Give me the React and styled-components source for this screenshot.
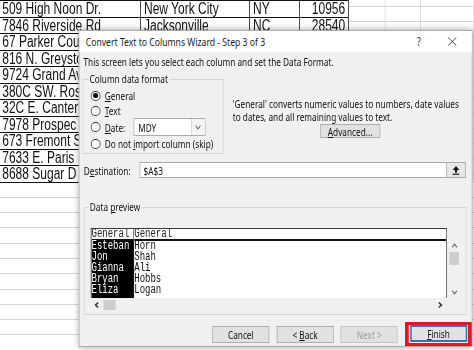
import React from 'react'
import styled, { createGlobalStyle } from 'styled-components'

const GlobalStyle = createGlobalStyle`
  html, body {
    margin: 0;
    padding: 0;
    overflow: hidden;
    background: #fff;
  }
`;

// the screenshot is squeezed sideways, so the canvas is laid out wide and scaled back
const Stage = styled.div`
  position: relative;
  width: 632px;
  height: 350px;
  overflow: hidden;
  transform: scaleX(0.75);
  transform-origin: 0 0;
  font-family: "Liberation Sans", Arial, sans-serif;
`;

const Sheet = styled.div`
  display: flex;
  flex-direction: column;
`;

const TopArea = styled.div`
  display: flex;
  align-items: flex-start;
`;

const DataBlock = styled.div`
  display: flex;
  flex-direction: column;
  width: 465.3px;
  border-top: 1px solid #111;
`;

const DataRow = styled.div`
  display: flex;
  height: 16.5px;
  box-sizing: border-box;
  border-bottom: 1px solid #111;
`;

const Cell = styled.div`
  width: ${p => p.$w}px;
  box-sizing: border-box;
  border-right: 1px solid #111;
  padding: 0 4px 0 ${p => p.$pl ?? 4}px;
  font-size: 16px;
  line-height: 15.5px;
  white-space: nowrap;
  overflow: hidden;
  text-align: ${p => p.$align || 'left'};
  color: #111;
`;

const ExtraBlock = styled.div`
  flex: 1;
  height: 182.5px;
  overflow: hidden;
  display: flex;
  flex-direction: column;
`;

const GridRow = styled.div`
  display: flex;
  flex: none;
  height: ${p => p.$h}px;
  box-sizing: border-box;
  border-bottom: 1px solid #d6d6d6;
`;

const GridCell = styled.div`
  width: ${p => p.$w}px;
  box-sizing: border-box;
  border-right: 1px solid #d6d6d6;
`;

/* ---------- dialog ---------- */

const Dialog = styled.div`
  position: absolute;
  left: 105.3px;
  top: 30px;
  width: 525px;
  height: 317px;
  box-sizing: border-box;
  background: #f0f0f0;
  border: 1px solid #a9a9a9;
  box-shadow: 0 0 8px rgba(0, 0, 0, 0.38);
  font-family: "Noto Sans", "Open Sans", sans-serif;
  font-size: 11px;
  color: #111;
  display: flex;
  flex-direction: column;
`;

const TitleBar = styled.div`
  height: 21px;
  flex: none;
  background: #fff;
  display: flex;
  align-items: center;
  padding: 0 20px 0 8px;
`;

const Title = styled.span`
  font-size: 11.5px;
  color: #222;
`;

const TitleTools = styled.div`
  margin-left: auto;
  display: flex;
  align-items: center;
  gap: 36px;
  color: #333;
  font-size: 12px;
`;

const Body = styled.div`
  display: flex;
  flex-direction: column;
  padding: 0 0 0 4px;
`;

const Intro = styled.div`
  margin-top: 4px;
  line-height: 12px;
  padding-left: 1px;
`;

const FormatRow = styled.div`
  display: flex;
  margin-top: 5px;
`;

const Group = styled.fieldset`
  margin: 0;
  padding: 0;
  width: ${p => p.$w}px;
  height: ${p => p.$h}px;
  box-sizing: border-box;
  border: 1px solid #d5d5d5;
  min-width: 0;
`;

const Legend = styled.legend`
  margin-left: ${p => p.$ml}px;
  padding: 0 2px;
  font-size: 11px;
  line-height: 12px;
`;

const RadioList = styled.div`
  display: flex;
  flex-direction: column;
  padding-top: 3px;
`;

const RadioRow = styled.div`
  display: flex;
  align-items: center;
  height: ${p => p.$h || 15}px;
`;

const Radio = styled.span`
  width: 13.3px;
  height: 10px;
  box-sizing: border-box;
  margin-left: 9.7px;
  border: solid #333;
  border-width: 1px 1.35px;
  border-radius: 50%;
  background: #fff;
  display: flex;
  align-items: center;
  justify-content: center;

  &::after {
    content: '';
    display: ${p => (p.$checked ? 'block' : 'none')};
    width: 6.7px;
    height: 5px;
    border-radius: 50%;
    background: #111;
  }
`;

const RadioLabel = styled.span`
  margin-left: 5.4px;
  width: ${p => (p.$w ? `${p.$w}px` : 'auto')};
  flex: none;
`;

const Select = styled.div`
  width: 96px;
  height: 18px;
  box-sizing: border-box;
  border: 1px solid #acacac;
  background: #fff;
  display: flex;
  align-items: center;
`;

const SelectValue = styled.span`
  flex: 1;
  padding-left: 5px;
`;

const SelectArrow = styled.span`
  width: 18.7px;
  height: 100%;
  box-sizing: border-box;
  border-left: 1px solid #d0d0d0;
  background: #f4f4f4;
  display: flex;
  align-items: center;
  justify-content: center;
`;

const Explain = styled.div`
  flex: 1;
  margin-left: 12px;
  margin-right: 6px;
  padding-top: 25px;
  display: flex;
  flex-direction: column;
`;

const ExplainText = styled.div`
  line-height: 12.5px;
  white-space: nowrap;
`;

const Button = styled.div`
  width: ${p => p.$w || 76}px;
  height: ${p => p.$h || 17}px;
  box-sizing: border-box;
  background: #e1e1e1;
  border: 1px solid ${p => (p.$disabled ? '#c4c4c4' : '#adadad')};
  color: ${p => (p.$disabled ? '#9d9d9d' : '#111')};
  display: flex;
  align-items: center;
  justify-content: center;
  flex: none;
`;

const ButtonText = styled.span`
  white-space: pre;
`;

const AdvancedButton = styled(Button)`
  align-self: center;
  margin-top: 1px;
`;

const DestRow = styled.div`
  display: flex;
  align-items: center;
  height: 16px;
  margin-top: 8px;
`;

const DestLabel = styled.span`
  width: 74.6px;
  padding-left: 1.4px;
  flex: none;
`;

const DestInput = styled.div`
  width: 409.4px;
  height: 16px;
  box-sizing: border-box;
  border: 1px solid #a9a9a9;
  background: #fff;
  padding-left: 4px;
  display: flex;
  align-items: center;
`;

const CollapseButton = styled.div`
  width: 25.3px;
  height: 16px;
  box-sizing: border-box;
  border: 1px solid #a9a9a9;
  border-left: none;
  background: #e6e6e6;
  display: flex;
  align-items: center;
  justify-content: center;
`;

const PreviewGroup = styled(Group)`
  margin-top: 23px;
  margin-left: 1.4px;
`;

const PreviewBox = styled.div`
  margin: 15px 0 0 8.3px;
  width: 494.7px;
  display: flex;
  flex-direction: column;
`;

const PreviewTop = styled.div`
  display: flex;
  height: 70px;
`;

const PreviewGrid = styled.div`
  flex: 1;
  display: flex;
  box-sizing: border-box;
  border: 1px solid #3a3a3a;
  border-bottom: none;
  background: #fff;
  font-family: "Liberation Mono", "Courier New", monospace;
  font-size: 12px;
  overflow: hidden;
`;

const PreviewColumn = styled.div`
  display: flex;
  flex-direction: column;
  width: ${p => (p.$w ? `${p.$w}px` : 'auto')};
  flex: ${p => (p.$w ? 'none' : '1')};
  background: ${p => (p.$selected ? '#000' : '#fff')};
  color: ${p => (p.$selected ? '#fff' : '#111')};
  border-right: ${p => (p.$selected ? '1px solid #333' : 'none')};
`;

const PreviewHead = styled.div`
  height: 12px;
  box-sizing: border-box;
  border-bottom: 2px solid #111;
  background: #fff;
  color: #222;
  line-height: 10px;
  white-space: nowrap;
`;

const PreviewCell = styled.div`
  height: 11px;
  line-height: 11px;
  white-space: nowrap;
`;

const VScroll = styled.div`
  width: 20px;
  display: flex;
  flex-direction: column;
  align-items: center;
  background: #f0f0f0;
`;

const ScrollArrow = styled.div`
  height: ${p => p.$h}px;
  width: 100%;
  flex: none;
  display: flex;
  align-items: center;
  justify-content: center;
`;

const VThumb = styled.div`
  width: 13.3px;
  height: 13px;
  margin-top: 2px;
  background: #cdcdcd;
`;

const Spacer = styled.div`
  flex: 1;
`;

const HScrollRow = styled.div`
  display: flex;
  height: 13px;
`;

const HScroll = styled.div`
  flex: 1;
  display: flex;
  align-items: center;
  padding: 0 6px 0 5.3px;
`;

const HThumb = styled.div`
  width: 16px;
  height: 10px;
  margin-left: 6px;
  background: #cdcdcd;
`;

const Corner = styled.div`
  width: 20px;
`;

const ButtonRow = styled.div`
  display: flex;
  justify-content: flex-end;
  align-items: center;
  gap: 9.7px;
  height: 24px;
  margin-top: 7px;
`;

const Highlight = styled.div`
  display: flex;
  border: solid #e3151d;
  border-width: 3px 5px;
  padding: 0 1.6px 1px;
`;

const FinishButton = styled(Button)`
  border: solid #3a73b5;
  border-width: 2px 2.5px;
`;

/* ---------- drawings ---------- */

const CloseIcon = () => (
  <svg width="12" height="9" viewBox="0 0 12 9">
    <path d="M0.5 0.5 L11.5 8.5 M11.5 0.5 L0.5 8.5" stroke="#333" strokeWidth="1" fill="none" />
  </svg>
);

const DownChevron = ({ color = '#555' }) => (
  <svg width="8" height="5" viewBox="0 0 8 5">
    <polyline points="0.7,0.7 4,4 7.3,0.7" stroke={color} strokeWidth="1.2" fill="none" />
  </svg>
);

const UpChevron = ({ color = '#555' }) => (
  <svg width="8" height="5" viewBox="0 0 8 5">
    <polyline points="0.7,4.3 4,1 7.3,4.3" stroke={color} strokeWidth="1.2" fill="none" />
  </svg>
);

const LeftChevron = () => (
  <svg width="6" height="6" viewBox="0 0 6 6">
    <polyline points="5,0.6 1.2,3 5,5.4" stroke="#333" strokeWidth="1.6" fill="none" />
  </svg>
);

const RightChevron = () => (
  <svg width="6" height="6" viewBox="0 0 6 6">
    <polyline points="1,0.6 4.8,3 1,5.4" stroke="#333" strokeWidth="1.6" fill="none" />
  </svg>
);

const CollapseIcon = () => (
  <svg width="10" height="9" viewBox="0 0 10 9">
    <polygon points="5,0 9.5,4 0.5,4" fill="#111" />
    <rect x="3.6" y="4" width="2.8" height="2.6" fill="#111" />
    <rect x="0.5" y="7.6" width="9" height="1.2" fill="#111" />
  </svg>
);

/* ---------- data ---------- */

const columns = [
  { w: 188, pl: 3 },
  { w: 145.3 },
  { w: 66.7 },
  { w: 65.3, align: 'right' },
];

// only the first two rows show beyond column A; the rest sits under the dialog
const addresses = [
  ['509 High Noon Dr.', 'New York City', 'NY', '10956'],
  ['7846 Riverside Rd', 'Jacksonville', 'NC', '28540'],
  ['67 Parker Cou', '', '', ''],
  ['816 N. Greysto', '', '', ''],
  ['9724 Grand Av', '', '', ''],
  ['380C SW. Ros', '', '', ''],
  ['32C E. Canter', '', '', ''],
  ['7978 Prospec', '', '', ''],
  ['673 Fremont S', '', '', ''],
  ['7633 E. Paris', '', '', ''],
  ['8688 Sugar D', '', '', ''],
];

const extraWidths = [68, 66.7, 100];
const firstNames = ['Esteban', 'Jon', 'Gianna', 'Bryan', 'Eliza'];
const lastNames = ['Horn', 'Shah', 'Ali', 'Hobbs', 'Logan'];

const App = () => {
  return (
    <Stage>
      <GlobalStyle />
      <Sheet>
        <TopArea>
          <DataBlock>
            {addresses.map((row, i) => (
              <DataRow key={i}>
                {row.map((value, j) => (
                  <Cell key={j} $w={columns[j].w} $pl={columns[j].pl} $align={columns[j].align}>
                    {value}
                  </Cell>
                ))}
              </DataRow>
            ))}
          </DataBlock>
          <ExtraBlock>
            {[6.5, ...Array(12).fill(15.3)].map((h, i) => (
              <GridRow key={i} $h={h}>
                {extraWidths.map((w, j) => <GridCell key={j} $w={w} />)}
              </GridRow>
            ))}
          </ExtraBlock>
        </TopArea>
        {Array(11).fill(0).map((_, i) => (
          <GridRow key={i} $h={15.3} />
        ))}
      </Sheet>

      <Dialog>
        <TitleBar>
          <Title>Convert Text to Columns Wizard - Step 3 of 3</Title>
          <TitleTools>
            <span>?</span>
            <CloseIcon />
          </TitleTools>
        </TitleBar>

        <Body>
          <Intro>This screen lets you select each column and set the Data Format.</Intro>

          <FormatRow>
            <Group $w={188} $h={81}>
              <Legend $ml={6}>Column data format</Legend>
              <RadioList>
                <RadioRow>
                  <Radio $checked />
                  <RadioLabel><u>G</u>eneral</RadioLabel>
                </RadioRow>
                <RadioRow>
                  <Radio />
                  <RadioLabel><u>T</u>ext</RadioLabel>
                </RadioRow>
                <RadioRow $h={18}>
                  <Radio />
                  <RadioLabel $w={38.6}><u>D</u>ate:</RadioLabel>
                  <Select>
                    <SelectValue>MDY</SelectValue>
                    <SelectArrow><DownChevron color="#666" /></SelectArrow>
                  </Select>
                </RadioRow>
                <RadioRow>
                  <Radio />
                  <RadioLabel>Do not <u>i</u>mport column (skip)</RadioLabel>
                </RadioRow>
              </RadioList>
            </Group>

            <Explain>
              <ExplainText>'General' converts numeric values to numbers, date values</ExplainText>
              <ExplainText>to dates, and all remaining values to text.</ExplainText>
              <AdvancedButton $w={80} $h={14}>
                <ButtonText><u>A</u>dvanced...</ButtonText>
              </AdvancedButton>
            </Explain>
          </FormatRow>

          <DestRow>
            <DestLabel>D<u>e</u>stination:</DestLabel>
            <DestInput>$A$3</DestInput>
            <CollapseButton><CollapseIcon /></CollapseButton>
          </DestRow>

          <PreviewGroup $w={510.7} $h={114}>
            <Legend $ml={5}>Data <u>p</u>review</Legend>
            <PreviewBox>
              <PreviewTop>
                <PreviewGrid>
                  <PreviewColumn $w={56} $selected>
                    <PreviewHead>General</PreviewHead>
                    {firstNames.map(n => <PreviewCell key={n}>{n}</PreviewCell>)}
                  </PreviewColumn>
                  <PreviewColumn>
                    <PreviewHead>General</PreviewHead>
                    {lastNames.map(n => <PreviewCell key={n}>{n}</PreviewCell>)}
                  </PreviewColumn>
                </PreviewGrid>
                <VScroll>
                  <ScrollArrow $h={12} />
                  <ScrollArrow $h={10}><UpChevron /></ScrollArrow>
                  <VThumb />
                  <Spacer />
                  <ScrollArrow $h={12}><DownChevron /></ScrollArrow>
                </VScroll>
              </PreviewTop>
              <HScrollRow>
                <HScroll>
                  <LeftChevron />
                  <HThumb />
                  <Spacer />
                  <RightChevron />
                </HScroll>
                <Corner />
              </HScrollRow>
            </PreviewBox>
          </PreviewGroup>

          <ButtonRow>
            <Button><ButtonText>Cancel</ButtonText></Button>
            <Button><ButtonText>{'< '}<u>B</u>ack</ButtonText></Button>
            <Button $disabled><ButtonText>{'Next >'}</ButtonText></Button>
            <Highlight>
              <FinishButton><ButtonText><u>F</u>inish</ButtonText></FinishButton>
            </Highlight>
          </ButtonRow>
        </Body>
      </Dialog>
    </Stage>
  )
}

export default App;
